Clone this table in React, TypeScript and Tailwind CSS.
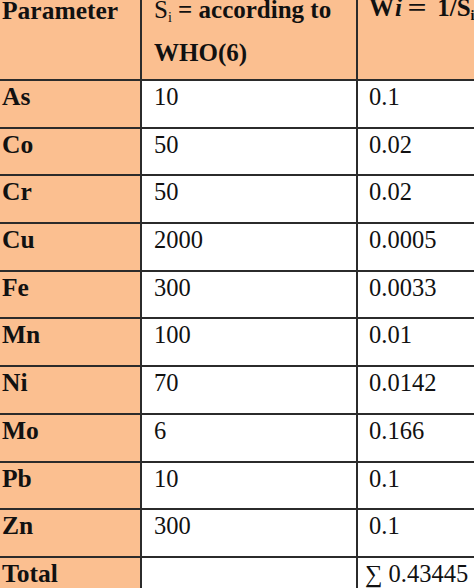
const rows: [string, string, string][] = [
  ["As", "10", "0.1"],
  ["Co", "50", "0.02"],
  ["Cr", "50", "0.02"],
  ["Cu", "2000", "0.0005"],
  ["Fe", "300", "0.0033"],
  ["Mn", "100", "0.01"],
  ["Ni", "70", "0.0142"],
  ["Mo", "6", "0.166"],
  ["Pb", "10", "0.1"],
  ["Zn", "300", "0.1"],
  ["Total", "", "∑ 0.43445"],
];

const serif = { fontFamily: '"Liberation Serif", "Times New Roman", serif' };

export default function App() {
  return (
    <div className="w-[474px] h-[588px] overflow-hidden bg-white text-[#111]" style={serif}>
      <div className="w-[560px]">
        {/* header */}
        <div className="grid grid-cols-[142px_216px_1fr] h-[81px] border-b-2 border-[#2b2b2b] bg-[#fbbf90]">
          <div className="border-r-2 border-[#2b2b2b] overflow-hidden">
            <div className="-mt-[11px] pl-[2px] text-[25.5px] font-bold leading-[43px]">Parameter</div>
          </div>
          <div className="border-r-2 border-[#2b2b2b] overflow-hidden">
            <div className="-mt-[12px] pl-[12px] text-[25px] font-bold leading-[43px] whitespace-nowrap">
              <span className="font-normal">
                S<sub className="text-[14px]">i</sub>
              </span>{" "}
              = according to
              <br />
              WHO(6)
            </div>
          </div>
          <div className="overflow-hidden">
            <div className="-mt-[14px] pl-[11px] text-[25px] font-bold leading-[43px] whitespace-nowrap flex items-baseline">
              <span>W</span>
              <i className="ml-[1px]">i</i>
              <span className="ml-[8px] inline-block scale-x-[1.35]">=</span>
              <span className="ml-[13px]">1/S</span>
              <sub className="text-[14px]">i</sub>
            </div>
          </div>
        </div>

        {rows.map(([p, s, w]) => (
          <div
            key={p}
            className="grid grid-cols-[142px_216px_1fr] h-[47.7px] border-b-2 border-[#2b2b2b]"
          >
            <div className="bg-[#fbbf90] border-r-2 border-[#2b2b2b] pl-[2px] pt-[2px] text-[25.5px] font-bold leading-[28px]">
              {p}
            </div>
            <div className="border-r-2 border-[#2b2b2b] pl-[12px] pt-[2px] text-[24.5px] leading-[28px]">
              {s}
            </div>
            <div className={`${p === "Total" ? "pl-[7px]" : "pl-[11px]"} pt-[2px] text-[24.5px] leading-[28px] whitespace-nowrap`}>
              {w}
            </div>
          </div>
        ))}
      </div>
    </div>
  );
}
